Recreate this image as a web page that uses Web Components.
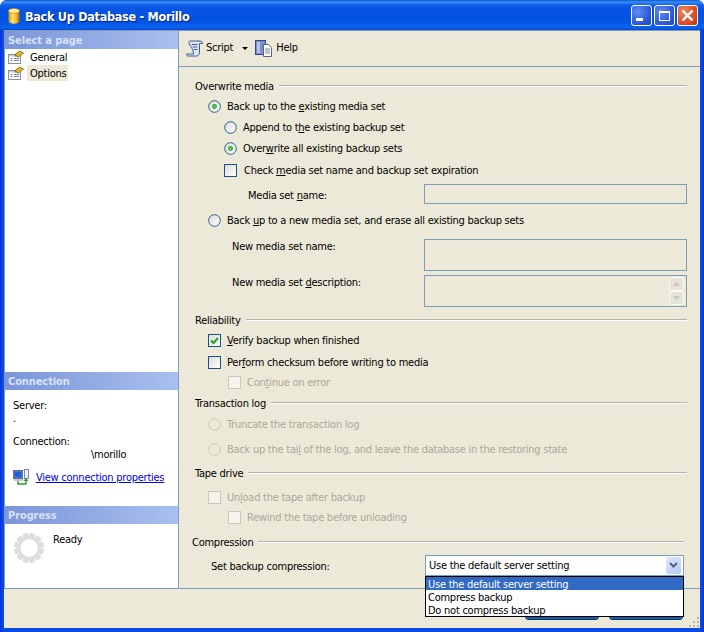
<!DOCTYPE html>
<html><head><meta charset="utf-8">
<style>
html,body{margin:0;padding:0;background:#fff;}
body{width:704px;height:632px;overflow:hidden;font:11px "DejaVu Sans Condensed","DejaVu Sans",sans-serif;font-stretch:condensed;letter-spacing:-.25px;color:#000;}
</style></head><body>
<x-window>
  <x-titlebar slot="title" text="Back Up Database - Morillo"></x-titlebar>
  <x-side slot="side">
    <x-sidehead text="Select a page"></x-sidehead>
    <x-pagelist></x-pagelist>
    <x-sidehead text="Connection"></x-sidehead>
    <x-conn></x-conn>
    <x-sidehead text="Progress"></x-sidehead>
    <x-progress></x-progress>
  </x-side>
  <x-toolbar slot="toolbar"></x-toolbar>
  <x-form slot="main"></x-form>
  <x-footer slot="footer"></x-footer>
</x-window>
<script>
function def(name, render){
  customElements.define(name, class extends HTMLElement{
    connectedCallback(){
      if(this.shadowRoot) return;
      const s=this.attachShadow({mode:'open'});
      s.innerHTML=render(this);
    }
  });
}
const a=(e,n,d='')=>e.getAttribute(n)??d;

def('x-window',()=>`<style>
:host{display:block;width:704px;height:632px;}
.win{width:704px;height:632px;box-sizing:border-box;border-radius:7px 7px 0 0;display:flex;flex-direction:column;overflow:hidden;
 background:linear-gradient(90deg,#0831d9 0,#0a4be6 3px,#0a4be6 701px,#0831d9 704px);}
.body{flex:1;margin:0 4px 4px 4px;display:flex;flex-direction:column;min-height:0;background:#ece9d8;border-top:1px solid #7f9db9;box-sizing:border-box;}
.top{flex:1;display:flex;min-height:0;}
.left{width:173px;flex:none;border-left:1px solid #7f9db9;}
.right{flex:1;display:flex;flex-direction:column;min-width:0;border-left:1px solid #7f9db9;}
</style><div class="win"><slot name="title"></slot><div class="body"><div class="top"><div class="left"><slot name="side"></slot></div><div class="right"><slot name="toolbar"></slot><slot name="main"></slot></div></div><slot name="footer"></slot></div></div>`);

def('x-titlebar',e=>`<style>
:host{display:block;height:30px;flex:none;}
.bar{height:30px;box-sizing:border-box;display:flex;align-items:center;padding:0 6px 0 8px;
background:linear-gradient(180deg,#0a57d6 0,#3b8df5 2px,#0d5fe8 5px,#0553e3 10px,#0355e4 22px,#0a60ee 26px,#0a5be0 29px,#003dc4 30px);}
.t{font:bold 12.5px "DejaVu Sans Condensed","DejaVu Sans",sans-serif;font-stretch:condensed;letter-spacing:-.27px;color:#fff;text-shadow:1px 1px 1px #0a1f80;margin-left:5px;flex:1;white-space:nowrap;position:relative;top:1px;}
svg{display:block}
.i{position:relative;top:1px;}
.b{width:21px;height:21px;box-sizing:border-box;border:1px solid #fff;border-radius:3px;margin-left:2px;background:radial-gradient(circle at 30% 30%,#5e8bf2,#2a55d6 70%,#1e43b8);display:flex;align-items:center;justify-content:center;}
.c{background:radial-gradient(circle at 30% 30%,#eb8a62,#d9451f 70%,#b8310f);}
</style><div class="bar">
<svg class="i" width="12" height="16" viewBox="0 0 12 16"><defs><linearGradient id="g" x1="0" x2="1" y1="0" y2="0"><stop offset="0" stop-color="#c98a10"/><stop offset=".35" stop-color="#ffe36a"/><stop offset=".7" stop-color="#f4b92b"/><stop offset="1" stop-color="#a86e08"/></linearGradient></defs><path d="M.5 3V13.5c0 1.2 2.4 2.2 5.5 2.2s5.5-1 5.5-2.2V3z" fill="url(#g)"/><ellipse cx="6" cy="2.8" rx="5.5" ry="2.3" fill="#fff0a0" stroke="#c98a10" stroke-width=".6"/></svg>
<span class="t">${a(e,'text')}</span>
<div class="b"><svg width="19" height="19"><rect x="4" y="12" width="7" height="3" fill="#fff"/></svg></div>
<div class="b"><svg width="19" height="19"><rect x="4.5" y="5.5" width="10" height="9" fill="none" stroke="#fff"/><rect x="4" y="5" width="11" height="2" fill="#fff"/></svg></div>
<div class="b c"><svg width="19" height="19"><path d="M4.5 4.5l10 10M14.5 4.5l-10 10" stroke="#fff" stroke-width="2.4"/></svg></div>
</div>`);

def('x-side',()=>`<style>:host{display:flex;flex-direction:column;height:100%;background:#fff;}</style><slot></slot>`);
def('x-sidehead',e=>`<style>:host{display:block;flex:none;height:18px;background:linear-gradient(90deg,#7b95d9,#a9c0ee);font:bold 11px "DejaVu Sans Condensed","DejaVu Sans",sans-serif;font-stretch:condensed;letter-spacing:-.1px;color:#d6e2f8;line-height:19px;padding-left:3px;}</style>${a(e,'text')}`);

const pageIcon=`<svg width="16" height="14" viewBox="0 0 16 14" style="flex:none"><rect x=".5" y="4.5" width="12" height="9" fill="#fff" stroke="#8f8f8f"/><rect x="1" y="5" width="11" height="1.5" fill="#c4cfe6"/><path d="M2.5 8.5h2M6 8.5h5M2.5 10.5h2M6 10.5h5" stroke="#7487b0"/><path d="M6.5 5l5-4 4 2-5 4z" fill="#e8b923" stroke="#6b5a10" stroke-width=".8"/><path d="M6.5 6.5l1-2 2 1.5z" fill="#8a7a3a"/></svg>`;
def('x-pagelist',()=>`<style>:host{display:block;height:323px;flex:none;}
.r{display:flex;align-items:center;height:16px;padding-left:3px;}
.r span{margin-left:3px;padding:0 3px;width:35px;height:16px;line-height:18px;}
.s{background:#ece9d8;}
</style><div class="r">${pageIcon}<span>General</span></div><div class="r">${pageIcon}<span class="s">Options</span></div>`);

def('x-conn',()=>`<style>:host{display:block;height:116px;flex:none;}
.p{padding:9px 0 0 8px;}
div.t{height:13px;line-height:14px;}
.link{display:flex;align-items:center;height:16px;}
a{color:#0000e0;text-decoration:underline;margin-left:7px;}
</style><div class="p"><div class="t">Server:</div><div class="t" style="height:23px">.</div><div class="t">Connection:</div><div class="t" style="padding-left:78px;height:21px;">\\morillo</div>
<div class="link"><svg width="16" height="16" viewBox="0 0 16 16"><rect x=".5" y="1.5" width="9" height="8" fill="#3a7ed8" stroke="#5a6a8a"/><rect x="2" y="3" width="6" height="5" fill="#1f5fd0"/><rect x="11.5" y=".5" width="4" height="9" fill="#eef" stroke="#7a8aa0"/><rect x="1" y="10" width="9" height="2" fill="#c4c8d4"/><path d="M5 12v3h8v-4" fill="none" stroke="#2f9a2f" stroke-width="1.4"/><path d="M10.5 12l2.5-3 2.5 3z" fill="#2f9a2f"/></svg><a>View connection properties</a></div></div>`);

const dots=Array.from({length:12},(_,i)=>`<rect x="-3" y="-15" width="6" height="6.5" rx="1" fill="#dedede" transform="rotate(${i*30+15})"/>`).join('');
def('x-progress',()=>`<style>:host{display:block;flex:1;}
.p{display:flex;padding:9px 0 0 9px;}
span{margin-left:9px;line-height:14px;}
svg{flex:none;display:block;}
</style><div class="p"><svg width="30" height="30" viewBox="-15 -15 30 30">${dots}</svg><span>Ready</span></div>`);

def('x-toolbar',()=>`<style>:host{display:block;height:36px;flex:none;box-sizing:border-box;border-bottom:1px solid #7f9db9;}
.b{display:flex;align-items:center;height:35px;padding-left:7px;}
span{margin-left:3px;margin-bottom:2px;}
svg{display:block;flex:none;}
</style><div class="b">
<svg width="17" height="17" viewBox="0 0 17 17"><path d="M4 1h10c1.5 0 2.5 1 2.5 2.5h-3V12c0 2.500-1.200 4-3 4H2c-1 0-1.500-1-1.500-2h7C7.500 8 3 6 3 2.500 3 1.700 3.400 1 4 1z" fill="#dfe7f6" stroke="#46598c"/><path d="M5.500 4.500h6M6.500 7h5M8 9.500h3.500" stroke="#46598c"/></svg>
<span>Script</span><svg style="margin-left:9px" width="6" height="4"><path d="M0 0h6L3 3z" fill="#000"/></svg>
<svg style="margin-left:7px" width="18" height="17" viewBox="0 0 18 17"><rect x=".5" y=".5" width="10" height="14" fill="#7c8fd0" stroke="#36458c"/><rect x="2" y="2" width="3" height="11" fill="#b5c2ea"/><path d="M8.500 4.500h5l3 3v9h-8z" fill="#fff" stroke="#5a6480"/><path d="M10 9h5M10 11h5M10 13h5" stroke="#7a86a8"/></svg>
<span>Help</span></div>`);

def('x-gh',e=>`<style>:host{display:flex;align-items:center;height:20px;margin-top:${a(e,'mt','0')}px;margin-left:${a(e,'ml','0')}px;margin-right:${a(e,'mr','0')}px;}
i{flex:1;height:1px;background:#b5b3a5;border-bottom:1px solid #fff;margin-left:5px;}
</style><span>${a(e,'text')}</span><i></i>`);

def('x-opt',e=>{
 const kind=a(e,'kind','radio'),on=e.hasAttribute('on'),dis=e.hasAttribute('dis');
 const grad=`<defs><linearGradient id="f" x1="0" y1="0" x2="1" y2="1"><stop offset="0" stop-color="#dcdcd7"/><stop offset="1" stop-color="#fff"/></linearGradient><radialGradient id="d"><stop offset="0" stop-color="#6fdc6f"/><stop offset="1" stop-color="#1f9a1f"/></radialGradient></defs>`;
 let m;
 if(kind==='radio'){
  m=`<svg width="13" height="13" viewBox="0 0 13 13">${grad}<circle cx="6.5" cy="6.5" r="5.800" fill="${dis?'#ece9d8':'url(#f)'}" stroke="${dis?'#cac8bb':'#2a5c8c'}"/>${on?'<circle cx="6.5" cy="6.5" r="2.400" fill="url(#d)"/>':''}</svg>`;
 }else{
  m=`<svg width="13" height="13" viewBox="0 0 13 13">${grad}<rect x=".5" y=".5" width="12" height="12" fill="${dis?'#f5f4ec':'url(#f)'}" stroke="${dis?'#cac8bb':'#1c5180'}"/>${on?'<path d="M3 6.500l2.500 2.500 4.500-5" fill="none" stroke="#21a121" stroke-width="2"/>':''}</svg>`;
 }
 return `<style>:host{display:flex;align-items:center;height:20px;margin-top:${a(e,'mt','0')}px;margin-left:${a(e,'ml','0')}px;color:${dis?'#aca899':'#000'};white-space:nowrap;}
 svg{display:block;flex:none;}
 span{margin-left:${a(e,'gap','6')}px;}
 </style>${m}<span>${a(e,'text')}</span>`;
});

def('x-field',e=>`<style>:host{display:flex;height:${a(e,'h','20')}px;margin-top:${a(e,'mt','0')}px;}
.l{width:229px;flex:none;padding-left:${a(e,'ml','53')}px;box-sizing:border-box;line-height:${a(e,'lh','23')}px;white-space:nowrap;}
.b{flex:1;box-sizing:border-box;border:1px solid #7f9db9;display:flex;justify-content:flex-end;}
.s{display:flex;flex-direction:column;padding:1px 2px 0 0;box-sizing:border-box;}
.s div{width:15px;height:14px;border:1px solid #fafaf5;box-sizing:border-box;border-radius:2px;display:flex;align-items:center;justify-content:center;background:#e6e4d8;}
</style><div class="l">${a(e,'text')}</div><div class="b">${e.hasAttribute('spin')?`<div class="s"><div><svg width="7" height="4"><path d="M0 4L3.500 0 7 4z" fill="#c9c7ba"/></svg></div><div><svg width="7" height="4"><path d="M0 0L3.500 4 7 0z" fill="#c9c7ba"/></svg></div></div>`:''}</div>`);

def('x-combo',e=>`<style>:host{display:flex;height:21px;margin-top:${a(e,'mt','0')}px;position:relative;}
.l{width:230px;flex:none;padding-left:${a(e,'ml','16')}px;box-sizing:border-box;line-height:24px;}
.b{width:259px;flex:none;box-sizing:border-box;border:1px solid #7f9db9;background:#fff;display:flex;align-items:center;padding:0 2px 0 1px;}
.v{flex:1;padding-left:2px;}
.a{width:15px;height:17px;background:linear-gradient(135deg,#dfe8fb,#b6c8f2);border-radius:2px;display:flex;align-items:center;justify-content:center;}
.d{position:absolute;left:230px;top:21px;width:259px;height:41px;box-sizing:border-box;border:1px solid #000;background:#fff;z-index:5;}
.d div{height:13px;line-height:16px;padding-left:2px;}
.d .o{background:#316ac5;color:#fff;}
</style><div class="l">${a(e,'text')}</div><div class="b"><span class="v">Use the default server setting</span><div class="a"><svg width="9" height="7"><path d="M1 1l3.500 3.500L8 1" fill="none" stroke="#4d6185" stroke-width="2"/></svg></div></div>
<div class="d"><div class="o">Use the default server setting</div><div>Compress backup</div><div>Do not compress backup</div></div>`);

def('x-form',()=>`<style>:host{display:block;flex:1;min-height:0;}
.f{padding:9px 13px 0 16px;display:flex;flex-direction:column;position:relative;}
</style><div class="f">
<x-gh text="Overwrite media"></x-gh>
<x-opt ml="13" text="Back up to the &lt;u&gt;e&lt;/u&gt;xisting media set" on></x-opt>
<x-opt ml="29" mt="1" gap="6" text="Append to t&lt;u&gt;h&lt;/u&gt;e existing backup set"></x-opt>
<x-opt ml="29" mt="1" gap="6" on text="Over&lt;u&gt;w&lt;/u&gt;rite all existing backup sets"></x-opt>
<x-opt ml="29" mt="2" kind="check" gap="7" text="Check &lt;u&gt;m&lt;/u&gt;edia set name and backup set expiration"></x-opt>
<x-field mt="4" text="Media set &lt;u&gt;n&lt;/u&gt;ame:"></x-field>
<x-opt ml="13" mt="6" text="Back &lt;u&gt;u&lt;/u&gt;p to a new media set, and erase all existing backup sets"></x-opt>
<x-field mt="9" h="32" ml="37" lh="16" text="New media set name:"></x-field>
<x-field mt="4" h="32" ml="37" lh="16" spin text="New media set &lt;u&gt;d&lt;/u&gt;escription:"></x-field>
<x-gh mt="3" text="Reliability"></x-gh>
<x-opt ml="13" kind="check" on text="&lt;u&gt;V&lt;/u&gt;erify backup when finished"></x-opt>
<x-opt ml="13" mt="2" kind="check" text="Per&lt;u&gt;f&lt;/u&gt;orm checksum before writing to media"></x-opt>
<x-opt ml="33" kind="check" dis text="Con&lt;u&gt;t&lt;/u&gt;inue on error"></x-opt>
<x-gh mt="1" text="Transaction log"></x-gh>
<x-opt ml="13" mt="1" dis text="Truncate the transaction log"></x-opt>
<x-opt ml="13" mt="5" dis text="Back up the tai&lt;u&gt;l&lt;/u&gt; of the log, and leave the database in the restoring state"></x-opt>
<x-gh mt="4" text="Tape drive"></x-gh>
<x-opt ml="13" mt="4" kind="check" dis text="Un&lt;u&gt;l&lt;/u&gt;oad the tape after backup"></x-opt>
<x-opt ml="33" kind="check" dis text="Rewind the tape before unloading"></x-opt>
<x-gh ml="-3" mr="3" mt="5" text="Compression"></x-gh>
<x-combo mt="3" text="Set backup compression:"></x-combo>
</div>`);

def('x-footer',()=>`<style>:host{display:block;height:40px;flex:none;box-sizing:border-box;border-top:1px solid #7f9db9;position:relative;}
.r{display:flex;justify-content:flex-end;gap:10px;padding:9px 17px 0 0;}
.b{width:74px;height:22px;box-sizing:border-box;border:1px solid #003c74;border-radius:3px;background:#f4f3ee;box-shadow:inset 0 -3px #1f5c99;}
.g{position:absolute;right:0;bottom:0;}
</style><div class="r"><div class="b"></div><div class="b"></div></div>
<svg class="g" width="12" height="12"><g fill="#b8b5a5"><rect x="9" y="1" width="2" height="2"/><rect x="5" y="5" width="2" height="2"/><rect x="9" y="5" width="2" height="2"/><rect x="1" y="9" width="2" height="2"/><rect x="5" y="9" width="2" height="2"/><rect x="9" y="9" width="2" height="2"/></g></svg>`);
</script>
</body></html>
